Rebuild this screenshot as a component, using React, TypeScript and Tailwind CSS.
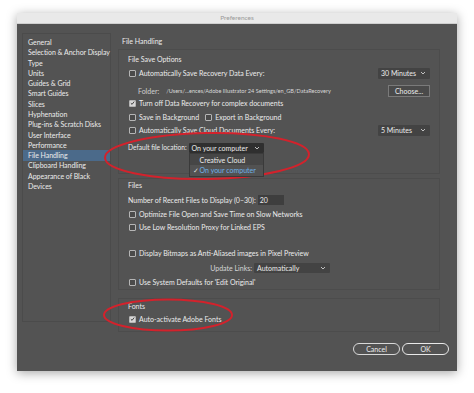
import React from "react";

const F = { fontFamily: "'Lato', 'Open Sans', sans-serif" };

function Box({ checked }: { checked?: boolean }) {
  return (
    <div className={`w-[7px] h-[7px] shrink-0 rounded-[1px] border border-[#b5b5b5] flex items-center justify-center ${checked ? "bg-[#d8d8d8]" : "bg-[#4a4a4a]"}`}>
      {checked && (
        <svg width="6" height="6" viewBox="0 0 6 6">
          <path d="M1 3.2 L2.5 4.6 L5 1.3" stroke="#333" strokeWidth="1.1" fill="none" />
        </svg>
      )}
    </div>
  );
}

function Chev() {
  return (
    <svg width="6" height="4" viewBox="0 0 6 4" className="shrink-0">
      <path d="M1 1 L3 3 L5 1" stroke="#cfcfcf" strokeWidth="0.9" fill="none" />
    </svg>
  );
}

function Check({ label, checked, className = "" }: { label: string; checked?: boolean; className?: string }) {
  return (
    <div className={`flex items-center gap-[3px] ${className}`}>
      <Box checked={checked} />
      <span>{label}</span>
    </div>
  );
}

function Select({ label, w, h = "h-[11px]", bg = "bg-[#434343]" }: { label: string; w: string; h?: string; bg?: string }) {
  return (
    <div className={`${w} ${h} ${bg} flex items-center justify-between pl-[3px] pr-[4px] rounded-[1px]`}>
      <span>{label}</span>
      <Chev />
    </div>
  );
}

const side = [
  "General",
  "Selection & Anchor Display",
  "Type",
  "Units",
  "Guides & Grid",
  "Smart Guides",
  "Slices",
  "Hyphenation",
  "Plug-ins & Scratch Disks",
  "User Interface",
  "Performance",
  "File Handling",
  "Clipboard Handling",
  "Appearance of Black",
  "Devices",
];

export default function App() {
  return (
    <div className="relative w-[474px] h-[393px] bg-white overflow-hidden" style={F}>
      <div className="pt-[13px] pl-[17px]">
        <div className="w-[440px] h-[358px] flex flex-col shadow-[0_2px_10px_rgba(0,0,0,0.35)]">
          <div className="h-[11px] bg-[#e9e9e9] border-b border-[#cfcfcf] flex items-center justify-center text-[6.5px] text-[#9a9a9a]">
            Preferences
          </div>
          <div className="flex-1 bg-[#535353] text-[#ececec] text-[7px] flex flex-col">
            <div className="flex">
              <div className="ml-[5px] mt-[9px] w-[89px] h-[289px] border border-[#4b4b4b] pt-[3px]">
                {side.map((s) => (
                  <div
                    key={s}
                    className={`h-[10.3px] flex items-center pl-[5px] whitespace-nowrap tracking-[-0.05px] ${s === "File Handling" ? "bg-[#4b6a8a]" : ""}`}
                  >
                    {s}
                  </div>
                ))}
              </div>
              <div className="ml-[7px] w-[322px] flex flex-col">
                <div className="mt-[12px] h-[10px] pl-[4px] flex items-center">File Handling</div>
                {/* File Save Options */}
                <div className="mt-[3px] h-[125px] border border-[#4c4c4c] px-[9px] flex flex-col">
                  <div className="mt-[4px] h-[10px] flex items-center">File Save Options</div>
                  <div className="mt-[3px] h-[12px] flex items-center justify-between">
                    <Check label="Automatically Save Recovery Data Every:" className="ml-[1px]" />
                    <Select label="30 Minutes" w="w-[52px]" />
                  </div>
                  <div className="mt-[6px] h-[12px] flex items-center justify-between">
                    <div className="flex items-center ml-[10px] gap-[7px]">
                      <span className="text-[#d0d0d0]">Folder:</span>
                      <span className="text-[5.6px] text-[#d8d8d8] whitespace-nowrap">/Users/...ences/Adobe Illustrator 24 Settings/en_GB/DataRecovery</span>
                    </div>
                    <div className="w-[42px] h-[12px] border border-[#7a7a7a] bg-[#4a4a4a] flex items-center justify-center">Choose...</div>
                  </div>
                  <div className="mt-[1px] h-[10px] flex items-center">
                    <Check label="Turn off Data Recovery for complex documents" checked className="ml-[1px]" />
                  </div>
                  <div className="mt-[4px] h-[10px] flex items-center gap-[6px]">
                    <Check label="Save in Background" className="ml-[1px]" />
                    <Check label="Export in Background" />
                  </div>
                  <div className="mt-[2px] h-[12px] flex items-center justify-between">
                    <Check label="Automatically Save Cloud Documents Every:" className="ml-[1px]" />
                    <Select label="5 Minutes" w="w-[52px]" />
                  </div>
                  <div className="mt-[7px] h-[10px] flex items-center gap-[2px]">
                    <span className="text-[6.6px]">Default file location:</span>
                    <div className="relative">
                      <Select label="On your computer" w="w-[75px]" h="h-[10px]" bg="bg-[#2f2f2f]" />
                      <div className="absolute left-0 top-full w-[75px] h-[24px] bg-[#464646] border border-[#3a3a3a] flex flex-col pt-[1px] z-10">
                        <div className="h-[10px] flex items-center pl-[10px]">Creative Cloud</div>
                        <div className="h-[11px] flex items-center bg-[#525252] text-[#6fb2ea]">
                          <span className="w-[10px] pl-[3px] text-[#d8d8d8]">✓</span>
                          <span>On your computer</span>
                        </div>
                      </div>
                    </div>
                  </div>
                </div>
                {/* Files */}
                <div className="mt-[4px] h-[112px] border border-[#4c4c4c] px-[9px] flex flex-col">
                  <div className="mt-[1px] h-[10px] flex items-center">Files</div>
                  <div className="mt-[5px] h-[10px] flex items-center gap-[2px]">
                    <span>Number of Recent Files to Display (0–30):</span>
                    <div className="w-[26px] h-[10px] bg-[#3e3e3e] flex items-center pl-[2px]">20</div>
                  </div>
                  <div className="mt-[4px] h-[10px] flex items-center">
                    <Check label="Optimize File Open and Save Time on Slow Networks" className="ml-[1px]" />
                  </div>
                  <div className="mt-[3px] h-[10px] flex items-center">
                    <Check label="Use Low Resolution Proxy for Linked EPS" className="ml-[1px]" />
                  </div>
                  <div className="mt-[16px] h-[10px] flex items-center">
                    <Check label="Display Bitmaps as Anti-Aliased images in Pixel Preview" className="ml-[1px]" />
                  </div>
                  <div className="mt-[5px] h-[10px] flex items-center">
                    <span className="w-[126px] text-right pr-[2px] text-[#d6d6d6]">Update Links:</span>
                    <Select label="Automatically" w="w-[76px]" h="h-[10px]" />
                  </div>
                  <div className="mt-[4px] h-[10px] flex items-center">
                    <Check label="Use System Defaults for 'Edit Original'" className="ml-[1px]" />
                  </div>
                </div>
                {/* Fonts */}
                <div className="mt-[8px] h-[34px] border border-[#4c4c4c] px-[9px] flex flex-col">
                  <div className="mt-[2px] h-[10px] flex items-center">Fonts</div>
                  <div className="mt-[3px] h-[10px] flex items-center">
                    <Check label="Auto-activate Adobe Fonts" checked className="ml-[1px]" />
                  </div>
                </div>
              </div>
            </div>
            <div className="mt-[11px] flex justify-end gap-[2px] pr-[8px]">
              <div className="w-[47px] h-[12px] rounded-full border border-[#d8d8d8] flex items-center justify-center">Cancel</div>
              <div className="w-[47px] h-[12px] rounded-full border border-[#e8e8e8] flex items-center justify-center">OK</div>
            </div>
          </div>
        </div>
      </div>
      <svg className="absolute inset-0 pointer-events-none" width="474" height="393" viewBox="0 0 474 393">
        <ellipse cx="207" cy="156" rx="102" ry="23" fill="none" stroke="#d3222c" strokeWidth="2" transform="rotate(-1 207 156)" />
        <ellipse cx="168" cy="315" rx="64" ry="15.5" fill="none" stroke="#d3222c" strokeWidth="2" />
      </svg>
    </div>
  );
}
